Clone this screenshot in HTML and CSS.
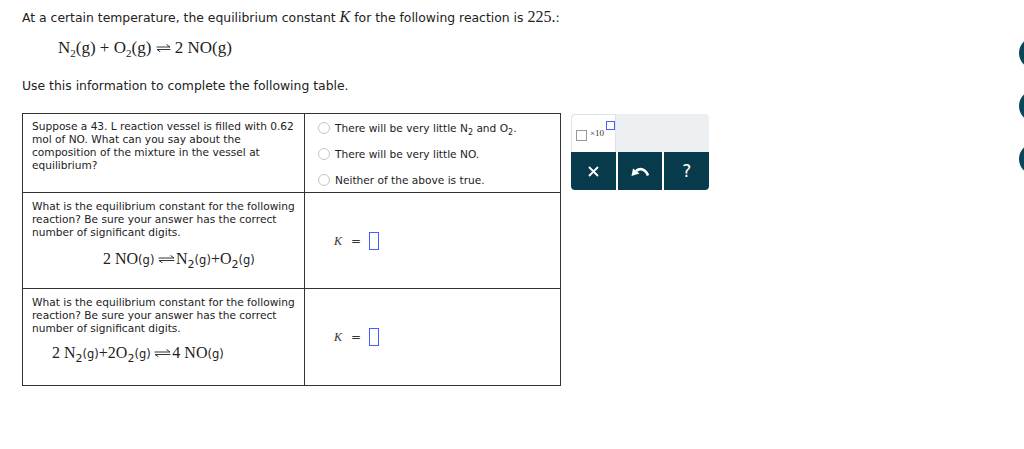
FILE: index.html
```html
<!DOCTYPE html>
<html>
<head>
<meta charset="utf-8">
<link rel="stylesheet" href="styles.css">
</head>
<body>
<div class="page">
  <p class="intro">At a certain temperature, the equilibrium constant <span class="mi">K</span> for the following reaction is <span class="mn">225.</span>:</p>
  <div class="eq-main">N<sub>2</sub>(g) + O<sub>2</sub>(g) <svg class="harp" width="15" height="8" viewBox="0 0 15 8"><path d="M0.5 3 H14 L10.5 0.5 M14.5 5.5 H1 L4.5 8" stroke="#333" stroke-width="1" fill="none"/></svg> 2 NO(g)</div>
  <p class="use">Use this information to complete the following table.</p>

  <div class="work">
    <table class="grid">
      <tr class="r1">
        <td class="q">Suppose a 43. L reaction vessel is filled with 0.62 mol of NO. What can you say about the composition of the mixture in the vessel at equilibrium?</td>
        <td class="a">
          <div class="opts">
            <label class="opt"><span class="radio"></span><span>There will be very little N<sub class="s">2</sub> and O<sub class="s">2</sub>.</span></label>
            <label class="opt"><span class="radio"></span><span>There will be very little NO.</span></label>
            <label class="opt"><span class="radio"></span><span>Neither of the above is true.</span></label>
          </div>
        </td>
      </tr>
      <tr class="r2">
        <td class="q">
          <div>What is the equilibrium constant for the following reaction? Be sure your answer has the correct number of significant digits.</div>
          <div class="eq eq2"><span class="tm">2 NO</span>(g) <svg class="harp harp-l" width="17" height="8" viewBox="0 0 17 8"><path d="M0.5 3 H16 L12.5 0.5 M16.5 5.5 H1 L4.5 8" stroke="#333" stroke-width="1" fill="none"/></svg><span class="tm">N</span><sub>2</sub>(g)<span class="tm">+O</span><sub>2</sub>(g)</div>
        </td>
        <td class="a"><div class="kline"><span class="mi">K</span><span class="eqs">=</span><span class="box"></span></div></td>
      </tr>
      <tr class="r3">
        <td class="q">
          <div>What is the equilibrium constant for the following reaction? Be sure your answer has the correct number of significant digits.</div>
          <div class="eq eq3"><span class="tm">2 N</span><sub>2</sub>(g)<span class="tm">+2O</span><sub>2</sub>(g) <svg class="harp harp-l" width="17" height="8" viewBox="0 0 17 8"><path d="M0.5 3 H16 L12.5 0.5 M16.5 5.5 H1 L4.5 8" stroke="#333" stroke-width="1" fill="none"/></svg><span class="tm">4 NO</span>(g)</div>
        </td>
        <td class="a"><div class="kline"><span class="mi">K</span><span class="eqs">=</span><span class="box"></span></div></td>
      </tr>
    </table>

    <div class="panel">
      <div class="panel-top">
        <div class="sci"><span class="sq"></span><span class="x10">×10</span><span class="exp"></span></div>
        <div class="panel-fill"></div>
      </div>
      <div class="panel-btns">
        <div class="btn"><svg width="11" height="11" viewBox="0 0 11 11"><path d="M1 1 L10 10 M10 1 L1 10" stroke="#fff" stroke-width="1.8" fill="none"/></svg></div>
        <div class="btn"><svg width="20" height="12" viewBox="0 0 20 12"><path d="M18 10.5 C15.5 4 10 2.5 6 6" stroke="#fff" stroke-width="2.6" fill="none"/><path d="M1.5 11 L3 3.5 L9.5 8.5 Z" fill="#fff"/></svg></div>
        <div class="btn q-btn">?</div>
      </div>
    </div>
  </div>
</div>
<div class="dots">
  <span class="dot"></span>
  <span class="dot"></span>
  <span class="dot"></span>
</div>
</body>
</html>
```
FILE: styles.css
```css
html, body {
  margin: 0;
  padding: 0;
  background: #fff;
}
body {
  font-family: "DejaVu Sans", Verdana, sans-serif;
  color: #222;
  width: 1024px;
  height: 449px;
  overflow: hidden;
  position: relative;
}
.page {
  padding: 8px 0 0 22px;
}
.intro {
  margin: 0;
  font-size: 12.4px;
  line-height: 17px;
}
.mi {
  font-family: "Liberation Serif", serif;
  font-style: italic;
  font-size: 16px;
}
.mn {
  font-family: "Liberation Serif", serif;
  font-size: 16px;
}
.eq-main {
  font-family: "Liberation Serif", serif;
  font-size: 17px;
  margin: 11px 0 0 36px;
  line-height: 22px;
}
.eq-main sub, .eq sub {
  font-size: 11px;
  vertical-align: -4px;
  line-height: 0;
}
.harp {
  vertical-align: 1px;
}
.harp-l {
  margin-right: 1px;
}
.use {
  margin: 18px 0 0 0;
  font-size: 12.4px;
  line-height: 17px;
}
.work {
  display: flex;
  align-items: flex-start;
  margin-top: 19px;
}
.grid {
  border-collapse: collapse;
  width: 539px;
  font-size: 10.6px;
  line-height: 13px;
}
.grid td {
  border: 1px solid #333;
  vertical-align: top;
  padding: 0;
}
.grid td.q {
  width: 263px;
  padding: 7px 9px 0 9px;
}
.r1 td.q { padding-top: 6px; }
.r1 td { height: 72px; }
.r2 td { height: 88px; }
.r3 td { height: 89px; }
.grid td.a {
  padding: 0;
}
.opts {
  display: flex;
  flex-direction: column;
  gap: 12px;
  padding: 7px 0 0 13px;
}
.opt {
  display: flex;
  align-items: center;
  gap: 5px;
  height: 14px;
}
.radio {
  width: 12px;
  height: 12px;
  border: 1px solid #c4c4c4;
  border-radius: 50%;
  box-sizing: border-box;
  background: #fff;
}
.s {
  font-size: 8px;
  vertical-align: -3px;
  line-height: 0;
}
.eq {
  font-size: 11.5px;
  white-space: nowrap;
}
.tm {
  font-family: "Liberation Serif", serif;
  font-size: 16px;
}
.eq2 {
  margin: 13px 0 0 71px;
}
.eq3 {
  margin: 11px 0 0 20px;
}
.kline {
  display: flex;
  align-items: center;
  padding: 39px 0 0 29px;
  font-size: 12px;
  color: #333;
}
.kline .mi {
  font-size: 12px;
}
.eqs {
  margin: 0 8px 0 9px;
  font-size: 12px;
}
.box {
  display: inline-block;
  width: 8px;
  height: 16px;
  border: 1px solid #4a5bff;
}
.panel {
  margin: 1px 0 0 10px;
  width: 138px;
  border-radius: 4px;
  overflow: hidden;
}
.panel-top {
  display: flex;
  height: 38px;
  background: #edf0f2;
}
.sci {
  width: 45px;
  background: #fff;
  border: 1px solid #dde2e6;
  border-bottom: none;
  border-top-left-radius: 4px;
  box-sizing: border-box;
  position: relative;
}
.sq {
  position: absolute;
  left: 4px;
  top: 15px;
  width: 11px;
  height: 11px;
  border: 1px solid #999;
  box-sizing: border-box;
}
.x10 {
  position: absolute;
  left: 18px;
  top: 13px;
  font-family: "Liberation Serif", serif;
  font-size: 9px;
  color: #333;
}
.exp {
  position: absolute;
  left: 34px;
  top: 6px;
  width: 9px;
  height: 9px;
  border: 1px solid #4a5bff;
  box-sizing: border-box;
}
.panel-fill {
  flex: 1;
}
.panel-btns {
  display: flex;
  gap: 2px;
  height: 38px;
  background: #fff;
}
.btn {
  flex: 1;
  background: #073a4b;
  color: #fff;
  display: flex;
  align-items: center;
  justify-content: center;
}
.q-btn {
  font-family: "DejaVu Sans", sans-serif;
  font-size: 17px;
  font-weight: normal;
}
.dots {
  position: absolute;
  right: 0;
  top: 37px;
  width: 5px;
  display: flex;
  flex-direction: column;
  gap: 21px;
  overflow: hidden;
}
.dot {
  display: block;
  width: 32px;
  height: 32px;
  border-radius: 50%;
  background: #0b4558;
}
```
